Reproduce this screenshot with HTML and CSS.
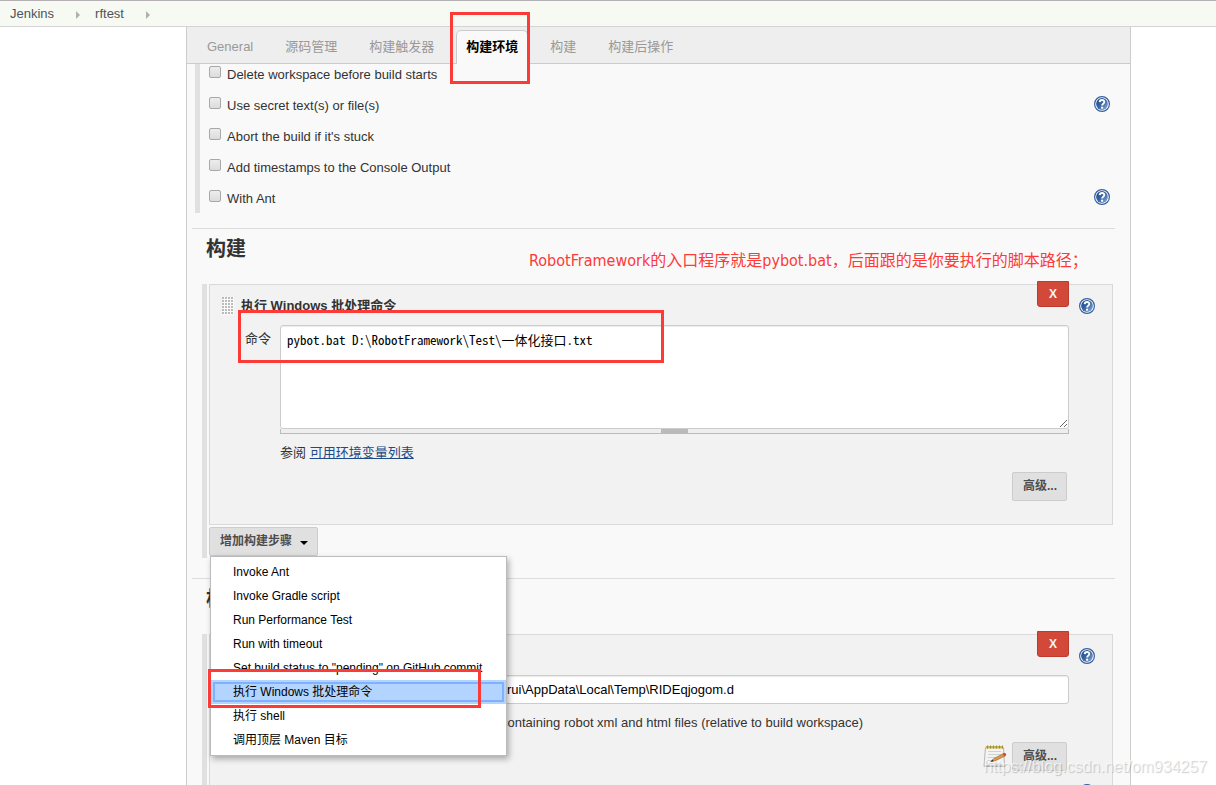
FILE: index.html
```html
<!DOCTYPE html>
<html lang="zh-CN">
<head>
<meta charset="utf-8">
<title>rftest Config [Jenkins]</title>
<link rel="stylesheet" href="styles.css">
</head>
<body>
<svg class="defs" aria-hidden="true">
  <defs>
    <linearGradient id="ball" x1="0" y1="0" x2="1" y2="1">
      <stop offset="0" stop-color="#1d4684"/>
      <stop offset="0.5" stop-color="#3a66a4"/>
      <stop offset="1" stop-color="#94b4dc"/>
    </linearGradient>
    <symbol id="help" viewBox="0 0 16 16">
      <circle cx="8" cy="8" r="7.4" fill="#fff" stroke="#355f9e" stroke-width="1.2"/>
      <circle cx="8" cy="8" r="5.9" fill="url(#ball)"/>
      <path d="M5.700 6.100C5.800 3.300 10.400 3.400 10.300 6C10.200 7.600 8.100 7.700 8.100 9.600" fill="none" stroke="#fff" stroke-width="1.9"/>
      <rect x="7.1" y="10.7" width="2" height="2" fill="#fff"/>
    </symbol>
  </defs>
</svg>

<nav class="breadcrumbs">
  <a href="#">Jenkins</a><span class="crumb-arrow"></span>
  <a href="#">rftest</a><span class="crumb-arrow"></span>
</nav>

<main class="panel">
  <nav class="tabs">
    <a class="tab" href="#">General</a>
    <a class="tab" href="#">源码管理</a>
    <a class="tab" href="#">构建触发器</a>
    <a class="tab active" href="#">构建环境<span class="mark mark-tab"></span></a>
    <a class="tab" href="#">构建</a>
    <a class="tab" href="#">构建后操作</a>
  </nav>

  <div class="options">
    <div class="option"><input type="checkbox" id="o1"><label for="o1">Delete workspace before build starts</label></div>
    <div class="option"><input type="checkbox" id="o2"><label for="o2">Use secret text(s) or file(s)</label><a class="help" href="#" aria-label="Help"><svg><use href="#help"/></svg></a></div>
    <div class="option"><input type="checkbox" id="o3"><label for="o3">Abort the build if it's stuck</label></div>
    <div class="option"><input type="checkbox" id="o4"><label for="o4">Add timestamps to the Console Output</label></div>
    <div class="option"><input type="checkbox" id="o5"><label for="o5">With Ant</label><a class="help" href="#" aria-label="Help"><svg><use href="#help"/></svg></a></div>
  </div>

  <section class="section">
    <h2>构建</h2>
    <p class="note">RobotFramework的入口程序就是pybot.bat，后面跟的是你要执行的脚本路径；</p>
    <div class="steps">
      <div class="step">
        <header class="step-head">
          <span class="grip"></span>
          <h3>执行 Windows 批处理命令</h3>
          <button class="delete" type="button">X</button>
          <a class="help" href="#" aria-label="Help"><svg><use href="#help"/></svg></a>
        </header>
        <div class="field">
          <label for="command">命令</label>
          <div class="control">
            <textarea id="command" class="box" spellcheck="false">pybot.bat D:\RobotFramework\Test\一体化接口.txt</textarea>
            <div class="sizer"><span></span></div>
            <p class="hint">参阅 <a href="#">可用环境变量列表</a></p>
            <div class="actions"><button class="button" type="button">高级...</button></div>
          </div>
          <span class="mark mark-command"></span>
        </div>
      </div>
      <div class="adder">
        <button class="button" type="button">增加构建步骤<span class="caret"></span></button>
        <ul class="menu">
          <li><a href="#">Invoke Ant</a></li>
          <li><a href="#">Invoke Gradle script</a></li>
          <li><a href="#">Run Performance Test</a></li>
          <li><a href="#">Run with timeout</a></li>
          <li><a href="#">Set build status to "pending" on GitHub commit</a></li>
          <li class="selected"><a href="#">执行 Windows 批处理命令</a><span class="mark mark-item"></span></li>
          <li><a href="#">执行 shell</a></li>
          <li><a href="#">调用顶层 Maven 目标</a></li>
        </ul>
      </div>
    </div>
  </section>

  <section class="section">
    <h2>构建后操作</h2>
    <div class="steps">
      <div class="step">
        <header class="step-head">
          <span class="grip"></span>
          <button class="delete" type="button">X</button>
          <a class="help" href="#" aria-label="Help"><svg><use href="#help"/></svg></a>
        </header>
        <div class="field">
          <span class="label-space"></span>
          <div class="control">
            <input class="box path" type="text" aria-label="Directory of Robot output" value="rui\AppData\Local\Temp\RIDEqjogom.d">
            <p class="hint covered">containing robot xml and html files (relative to build workspace)</p>
            <div class="actions">
              <svg class="notepad" viewBox="0 0 24 24" aria-hidden="true">
                <path d="M2.500 2.500H20.500L21.500 21.500H1Z" fill="#f4f4f2" stroke="#b5b5b0"/>
                <path d="M1 20.500H21.500V22H1Z" fill="#b5b5b0"/>
                <path d="M3 1H20V3.500H3Z" fill="#c9b653"/>
                <path d="M4.500 .5V3.500M7.500 .5V3.500M10.500 .5V3.500M13.500 .5V3.500M16.500 .5V3.500M19.500 .5V3.500" stroke="#9a8c40"/>
                <path d="M5 6.500H18M5 9.500H18M4.500 12.500H13M4.500 15.500H9M4.500 18.500H17" stroke="#cdd2d2"/>
                <path d="M8 16.500L11 13.400L20.500 8.500L22 11L12 15.900Z" fill="#dc9a48" stroke="#93602a" stroke-width=".6"/>
                <path d="M7.400 16.700L9.500 14.600L10.500 16.200Z" fill="#333"/>
                <path d="M19.800 8.700L21.800 7.700Q24 8.800 23 10.600L21.200 11.500Z" fill="#d4473b"/>
              </svg>
              <button class="button" type="button">高级...</button>
            </div>
          </div>
        </div>
        <a class="help next-help" href="#" aria-label="Help"><svg><use href="#help"/></svg></a>
      </div>
    </div>
  </section>
</main>
<div class="watermark">https://blog.csdn.net/om934257</div>
</body>
</html>
```

FILE: styles.css
```css
* { box-sizing: border-box; }

body {
  margin: 0;
  height: 100vh;
  overflow: hidden;
  position: relative;
  display: flex;
  flex-direction: column;
  background: #fff;
  color: #333;
  font: 13px/20px "Liberation Sans", "Noto Sans CJK SC", sans-serif;
}

h2, h3, p, ul { margin: 0; padding: 0; }
button, input, textarea { font: inherit; }
.defs { position: absolute; width: 0; height: 0; }

.breadcrumbs {
  display: flex;
  align-items: center;
  flex: none;
  height: 27px;
  padding-left: 10px;
  border-top: 1px solid #b5b0b4;
  border-bottom: 1px solid #d3d4d3;
  background: #f6faf2;
}
.breadcrumbs a { color: #4d545d; text-decoration: none; }
.crumb-arrow {
  margin: 2px 15px 0 22px;
  border: 4px solid transparent;
  border-left-color: #b0b0b0;
  border-right-width: 0;
}

.panel {
  flex: 1 0 auto;
  margin: 0 85px 0 186px;
  border: solid #ccc;
  border-width: 0 1px;
  background: #f9f9f9;
}

.tabs {
  display: flex;
  align-items: flex-end;
  gap: 12px;
  height: 37px;
  padding-left: 10px;
  border-bottom: 1px solid #ccc;
  background: #eee;
}
.tab {
  position: relative;
  height: 34px;
  margin-bottom: -1px;
  padding: 0 9px;
  border: 1px solid transparent;
  border-bottom: 0;
  border-radius: 5px 5px 0 0;
  color: #999;
  line-height: 32px;
  text-decoration: none;
}
.tab.active {
  border-color: #ccc;
  background: #f9f9f9;
  color: #000;
  font-weight: bold;
}

.mark {
  position: absolute;
  z-index: 5;
  border: 3px solid #fc3a38;
  pointer-events: none;
}
.mark-tab { left: -7px; top: -19px; width: 80px; height: 72px; }
.mark-command { left: 28px; top: -15px; width: 426px; height: 53px; }
.mark-item { left: -3px; top: -11px; width: 273px; height: 39px; }

.options {
  display: flex;
  flex-direction: column;
  gap: 11px;
  margin: 0 20px 15px 8px;
  padding: 0 0 5px 9px;
  border-left: 5px solid #e0e0e0;
}
.option { display: flex; align-items: center; height: 20px; }
.option input {
  appearance: none;
  width: 12px;
  height: 12px;
  margin: 0 6px 4px 0;
  border: 1px solid #a8a8a8;
  border-radius: 2px;
  background: linear-gradient(#ededed, #dcdcdc);
}
.option label { padding-top: 1px; }
.help { display: block; width: 16px; height: 16px; }
.help svg { display: block; width: 16px; height: 16px; }
.option .help { margin: 0 0 2px auto; }

.section {
  position: relative;
  margin: 0 15px 20px 5px;
  padding-top: 8px;
  border-top: 1px solid #ddd;
}
.section h2 {
  padding-left: 14px;
  font-size: 20px;
  line-height: 24px;
}
.note {
  position: absolute;
  left: 337px;
  top: 20px;
  color: #fc3a38;
  font: 16px/24px "DejaVu Sans Condensed", "Noto Sans CJK SC", sans-serif;
  white-space: nowrap;
}

.steps {
  margin: 23px 2px 0 10px;
  padding: 0 0 2px 2px;
  border-left: 5px solid #e0e0e0;
}
.step {
  padding-bottom: 23px;
  border: 1px solid #d9d9d9;
  background: #f2f2f2;
}
.step-head {
  display: flex;
  align-items: flex-start;
  height: 40px;
  padding: 0 17px 0 12px;
}
.grip {
  width: 12px;
  height: 18px;
  margin: 12px 7px 0 0;
  background: radial-gradient(circle at 1px 1px, #bbb 1px, #fafafa 1px) 0 0 / 3px 3px;
}
.step-head h3 { padding-top: 11px; font-size: 13px; line-height: 20px; }
.delete {
  width: 32px;
  height: 26px;
  margin: -4px 10px 0 auto;
  padding: 0;
  border: 1px solid #bd3c2e;
  border-radius: 0 0 3px 3px;
  background: #d24939;
  color: #f2f2f2;
  font-size: 12px;
  font-weight: bold;
}
.step-head .help { margin-top: 13px; }

.field { position: relative; display: flex; padding: 0 43px 0 35px; }
.field > label, .label-space { flex: none; width: 35px; padding-top: 4px; }
.control { flex: 1; min-width: 0; }
.box {
  display: block;
  width: 100%;
  padding: 5px 6px;
  border: 1px solid #ccc;
  border-radius: 3px;
  outline: 0;
  background: #fff;
  color: #000;
  box-shadow: inset 0 1px 1px rgba(0, 0, 0, .08);
}
textarea.box {
  height: 104px;
  font: 13px/18px "Noto Sans Mono CJK SC", "Liberation Mono", "Noto Sans CJK SC", monospace;
}
/* the left part of the value lies under the open menu */
.path { height: 29px; padding-left: 226px; }
.sizer {
  height: 5px;
  border: 1px solid #bbb;
  border-top: 0;
  background: #eee;
}
.sizer span { display: block; width: 27px; height: 4px; margin: 0 auto; background: #bababa; }
.hint { padding-top: 9px; }
.hint a { color: #204a87; }
.covered { padding-left: 221px; }
.actions {
  display: flex;
  justify-content: flex-end;
  align-items: center;
  gap: 5px;
  margin: 9px 2px 0 0;
}
.notepad { width: 24px; height: 24px; }

.button {
  display: inline-flex;
  align-items: center;
  height: 29px;
  padding: 0 9px 1px 10px;
  border: 1px solid #ccc;
  border-radius: 2px;
  background: #e0e0e0;
  color: #4d4d4d;
  font-size: 12px;
  font-weight: bold;
}
.caret {
  margin: 3px 0 0 8px;
  border: 4px solid transparent;
  border-top-color: #000;
  border-bottom-width: 0;
}
.adder { position: relative; display: flex; margin-top: 2px; }
.menu {
  position: absolute;
  z-index: 3;
  left: 1px;
  top: 29px;
  width: 297px;
  padding: 3px 0;
  border: 1px solid #bbb;
  background: #fff;
  box-shadow: 2px 3px 6px rgba(0, 0, 0, .3);
  list-style: none;
}
.menu li { position: relative; }
.menu a {
  display: block;
  padding-left: 22px;
  color: #000;
  font-size: 12px;
  line-height: 24px;
  text-decoration: none;
}
.menu .selected a {
  height: 24px;
  background: #b3d4ff;
  outline: 2px solid #80b1ff;
  outline-offset: -4px;
}
.next-help { margin: 13px 17px 0 auto; }

.watermark {
  position: absolute;
  right: 9px;
  bottom: 8px;
  z-index: 6;
  color: rgba(255, 255, 255, .65);
  font-size: 16px;
  text-shadow: 1px 1px 1px rgba(0, 0, 0, .2);
}
```
